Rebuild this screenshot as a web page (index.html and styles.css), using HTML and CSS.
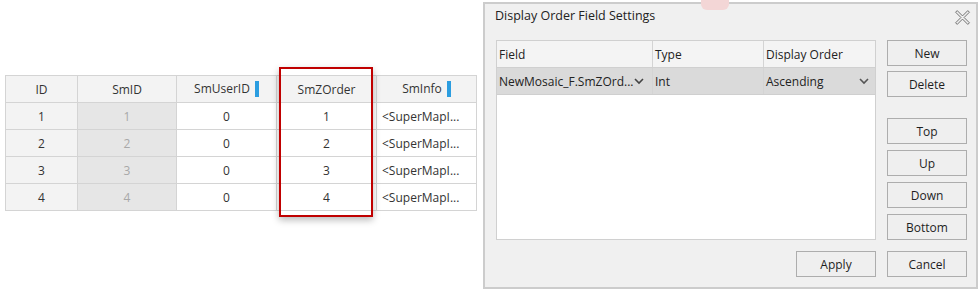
FILE: index.html
```html
<!DOCTYPE html>
<html>
<head>
<meta charset="utf-8">
<link rel="stylesheet" href="styles.css">
</head>
<body>
<div class="page">
  <div class="left">
    <div class="table-wrap">
      <table class="attr">
        <thead>
          <tr>
            <th class="c-id">ID</th>
            <th class="c-smid">SmID</th>
            <th class="c-user">SmUserID<span class="mark"></span></th>
            <th class="c-z">SmZOrder</th>
            <th class="c-info">SmInfo<span class="mark"></span></th>
          </tr>
        </thead>
        <tbody>
          <tr><td class="c-id">1</td><td class="c-smid">1</td><td>0</td><td>1</td><td class="c-info">&lt;SuperMapI...</td></tr>
          <tr><td class="c-id">2</td><td class="c-smid">2</td><td>0</td><td>2</td><td class="c-info">&lt;SuperMapI...</td></tr>
          <tr><td class="c-id">3</td><td class="c-smid">3</td><td>0</td><td>3</td><td class="c-info">&lt;SuperMapI...</td></tr>
          <tr><td class="c-id">4</td><td class="c-smid">4</td><td>0</td><td>4</td><td class="c-info">&lt;SuperMapI...</td></tr>
        </tbody>
      </table>
      <div class="highlight"></div>
    </div>
  </div>

  <div class="dialog">
    <div class="blob"></div>
    <div class="titlebar">
      <span class="title">Display Order Field Settings</span>
      <svg class="close" width="17" height="17" viewBox="0 0 16 16">
        <path d="M1.5 3 L3 1.5 L8 6.5 L13 1.5 L14.5 3 L9.5 8 L14.5 13 L13 14.5 L8 9.5 L3 14.5 L1.5 13 L6.5 8 Z" fill="none" stroke="#6a6a6a" stroke-width="0.9" stroke-linejoin="round"/>
      </svg>
    </div>
    <div class="body">
      <div class="main-col">
        <div class="grid">
          <div class="grow ghead">
            <div class="gc g1">Field</div>
            <div class="gc g2">Type</div>
            <div class="gc g3">Display Order</div>
          </div>
          <div class="grow gsel">
            <div class="gc g1"><span class="ell">NewMosaic_F.SmZOrd...</span><svg class="chev" width="10" height="8" viewBox="0 0 10 8"><path d="M1 2 L5 6 L9 2" fill="none" stroke="#444" stroke-width="1.6"/></svg></div>
            <div class="gc g2">Int</div>
            <div class="gc g3 spread"><span>Ascending</span><svg class="chev" width="10" height="8" viewBox="0 0 10 8"><path d="M1 2 L5 6 L9 2" fill="none" stroke="#555" stroke-width="1.6"/></svg></div>
          </div>
        </div>
        <div class="footer">
          <button class="btn">Apply</button>
        </div>
      </div>
      <div class="side">
        <button class="btn">New</button>
        <button class="btn b-delete">Delete</button>
        <button class="btn b-top">Top</button>
        <button class="btn b-step">Up</button>
        <button class="btn b-step">Down</button>
        <button class="btn b-step">Bottom</button>
        <button class="btn b-cancel">Cancel</button>
      </div>
    </div>
  </div>
</div>
</body>
</html>
```
FILE: styles.css
```css
html, body {
  margin: 0;
  padding: 0;
  background: #ffffff;
}
body {
  width: 979px;
  height: 293px;
  overflow: hidden;
  font-family: "Open Sans", "Noto Sans", "DejaVu Sans", sans-serif;
  font-size: 12px;
  color: #333333;
}
.page {
  display: flex;
  align-items: flex-start;
  height: 293px;
}
.left {
  width: 483px;
  padding-top: 75px;
  padding-left: 5px;
  box-sizing: border-box;
}
.table-wrap {
  position: relative;
  width: 472px;
}
.attr {
  border-collapse: collapse;
  table-layout: fixed;
  width: 472px;
}
.attr th, .attr td {
  border: 1px solid #d4d4d4;
  height: 26px;
  padding: 0;
  text-align: center;
  font-weight: normal;
  white-space: nowrap;
  overflow: hidden;
}
.attr th {
  background: #f3f3f3;
  color: #333;
}
.attr td.c-id { background: #f3f3f3; }
.attr td.c-smid { background: #e6e6e6; color: #a8a8a8; }
.attr td.c-info { text-align: left; padding-left: 5px; }
.c-id { width: 71px; }
.c-smid { width: 98px; }
.c-user { width: 99px; }
.c-z { width: 99px; }
.c-info { width: 99px; }
.mark {
  display: inline-block;
  width: 4px;
  height: 16px;
  background: #2b9de0;
  vertical-align: middle;
  margin-left: 5px;
  position: relative;
  top: -1px;
}
.highlight {
  position: absolute;
  left: 274px;
  top: -8px;
  width: 90px;
  height: 146px;
  border: 2px solid #c00000;
  box-shadow: 0 3px 7px rgba(0,0,0,0.28);
}

.dialog {
  position: relative;
  margin-top: 2px;
  width: 495px;
  height: 287px;
  box-sizing: border-box;
  border: 2px solid #cccccc;
  background: #f0f0f0;
  display: flex;
  flex-direction: column;
}
.blob {
  position: absolute;
  left: 216px;
  top: -4px;
  width: 28px;
  height: 10px;
  border-radius: 0 0 6px 6px;
  background: #f3d6d6;
}
.titlebar {
  height: 36px;
  display: flex;
  align-items: flex-start;
  justify-content: space-between;
  padding-left: 10px;
  padding-right: 5px;
}
.title {
  margin-top: 3px;
  color: #222;
  font-size: 12.5px;
}
.close {
  margin-top: 5px;
}
.body {
  display: flex;
  gap: 11px;
  padding-left: 11px;
}
.main-col {
  width: 380px;
  display: flex;
  flex-direction: column;
}
.grid {
  height: 200px;
  box-sizing: border-box;
  border: 1px solid #d0d0d0;
  background: #ffffff;
}
.grow {
  display: flex;
  height: 27px;
  box-sizing: border-box;
  border-bottom: 1px solid #d0d0d0;
}
.ghead { background: #f4f4f4; }
.gsel { background: #dadada; border-bottom-color: #cfcfcf; }
.gc {
  box-sizing: border-box;
  display: flex;
  align-items: center;
  padding-left: 2px;
  border-right: 1px solid #d4d4d4;
  color: #222;
  white-space: nowrap;
  overflow: hidden;
}
.g1 { width: 156px; }
.g2 { width: 111px; }
.g3 { flex: 1; border-right: none; }
.spread { justify-content: space-between; padding-right: 6px; }
.ell { overflow: hidden; }
.chev { flex: none; margin-left: 1px; }
.footer {
  display: flex;
  justify-content: flex-end;
  margin-top: 11px;
}
.side {
  width: 80px;
  display: flex;
  flex-direction: column;
}
.btn {
  width: 80px;
  height: 26px;
  box-sizing: border-box;
  border: 1px solid #adadad;
  background: #efefef;
  font-family: "Open Sans", "Noto Sans", "DejaVu Sans", sans-serif;
  font-size: 12px;
  color: #1e1e1e;
  padding: 0;
  margin: 0;
}
.b-delete { margin-top: 5px; }
.b-top { margin-top: 21px; }
.b-step { margin-top: 6px; }
.b-cancel { margin-top: 11px; }
```
